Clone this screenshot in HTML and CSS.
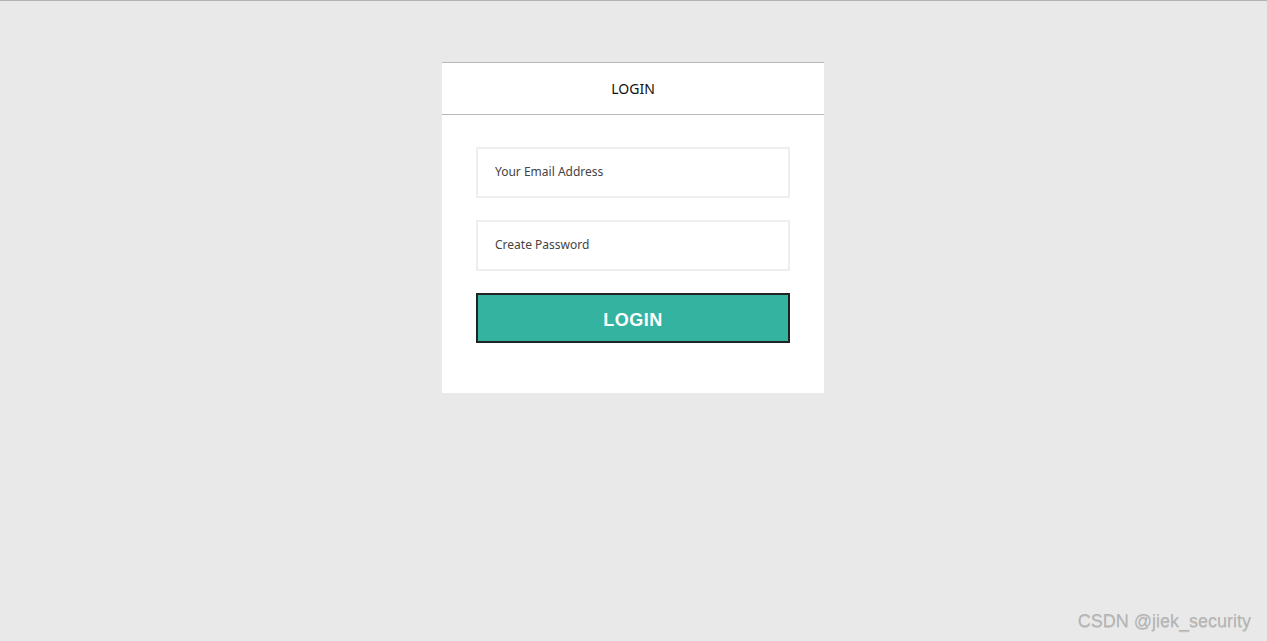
FILE: index.html
```html
<!DOCTYPE html>
<html>
<head>
<meta charset="utf-8">
<link rel="stylesheet" href="styles.css">
</head>
<body>
<div class="topline"></div>
<div class="page">
  <div class="card">
    <div class="card-head">LOGIN</div>
    <form class="card-body">
      <input class="field" type="text" placeholder="Your Email Address">
      <input class="field" type="password" placeholder="Create Password">
      <button class="btn" type="button">LOGIN</button>
    </form>
  </div>
</div>
<div class="watermark">CSDN @jiek_security</div>
</body>
</html>
```
FILE: styles.css
```css
html, body {
  margin: 0;
  padding: 0;
  height: 100%;
}
body {
  background: #e8e9e8;
  font-family: "Noto Sans", "Open Sans", sans-serif;
  overflow: hidden;
  position: relative;
}
.topline {
  height: 1px;
  background: #b2b2b2;
}
.page {
  display: flex;
  justify-content: center;
  padding-top: 61px;
  padding-right: 1px;
}
.card {
  width: 382px;
  background: #fff;
  border-top: 1px solid #b8b8b8;
}
.card-head {
  height: 51px;
  border-bottom: 1px solid #b8b8b8;
  display: flex;
  align-items: center;
  justify-content: center;
  font-size: 14px;
  color: #111;
}
.card-body {
  display: flex;
  flex-direction: column;
  gap: 22px;
  padding: 32px 34px 50px;
  margin: 0;
}
.field {
  box-sizing: border-box;
  height: 51px;
  width: 100%;
  border: 2px solid #eeeeee;
  padding: 0 17px 3px;
  font-family: "Noto Sans", "Open Sans", sans-serif;
  font-size: 12px;
  color: #444;
  outline: none;
  margin: 0;
}
.field::placeholder {
  color: #444;
}
.btn {
  box-sizing: border-box;
  height: 50px;
  width: 100%;
  border: 2px solid #222;
  background: #34b3a0;
  color: #fff;
  font-family: "Liberation Sans", Arial, sans-serif;
  font-weight: bold;
  font-size: 18px;
  letter-spacing: 0.5px;
  margin: 0;
  padding: 5px 0 0;
}
.watermark {
  position: absolute;
  right: 16px;
  bottom: 9px;
  font-family: "Liberation Sans", Arial, sans-serif;
  font-size: 18px;
  color: #b4b4b4;
  text-shadow: 0 1px 0 rgba(0, 0, 0, 0.12);
}
```
